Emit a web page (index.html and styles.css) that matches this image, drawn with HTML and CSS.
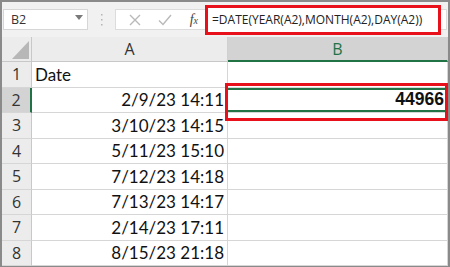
FILE: index.html
```html
<!DOCTYPE html>
<html lang="en">
<head>
  <meta charset="UTF-8">
  <title>Excel DATE formula</title>
  <link rel="stylesheet" href="styles.css">
</head>
<body>
  <div class="window">
    <div class="toolbar">
      <div class="namebox">
        <span>B2</span>
        <svg width="8" height="5" viewBox="0 0 8 5"><path d="M0 0h8L4 5z" fill="#7a7a7a"/></svg>
      </div>
      <div class="grip">
        <svg width="3" height="14" viewBox="0 0 3 14"><g fill="#b4b4b4"><rect x="1" y="1" width="1.5" height="1.5"/><rect x="1" y="6" width="1.5" height="1.5"/><rect x="1" y="11" width="1.5" height="1.5"/></g></svg>
      </div>
      <div class="fxbar">
        <div class="fxbtns">
          <svg width="12" height="12" viewBox="0 0 12 12"><path d="M1 1l10 10M11 1L1 11" stroke="#b9b9b9" stroke-width="1.4" fill="none"/></svg>
          <svg width="14" height="12" viewBox="0 0 14 12"><path d="M1 6.5l4 4L13 1" stroke="#b9b9b9" stroke-width="1.4" fill="none"/></svg>
          <span class="fx">f<sub>x</sub></span>
        </div>
        <div class="formula">=DATE(YEAR(A2),MONTH(A2),DAY(A2))</div>
      </div>
    </div>

    <div class="sheet">
      <div class="corner">
        <svg width="17" height="18" viewBox="0 0 17 18"><path d="M17 0v18H0z" fill="#b7b7b7"/></svg>
      </div>
      <div class="colhead">A</div>
      <div class="colhead active">B</div>

      <div class="rowhead">1</div>
      <div class="cell">Date</div>
      <div class="cell"></div>

      <div class="rowhead active">2</div>
      <div class="cell num">2/9/23 14:11</div>
      <div class="cell result">44966</div>

      <div class="rowhead">3</div>
      <div class="cell num">3/10/23 14:15</div>
      <div class="cell"></div>

      <div class="rowhead">4</div>
      <div class="cell num">5/11/23 15:10</div>
      <div class="cell"></div>

      <div class="rowhead">5</div>
      <div class="cell num">7/12/23 14:18</div>
      <div class="cell"></div>

      <div class="rowhead">6</div>
      <div class="cell num">7/13/23 14:17</div>
      <div class="cell"></div>

      <div class="rowhead">7</div>
      <div class="cell num">2/14/23 17:11</div>
      <div class="cell"></div>

      <div class="rowhead">8</div>
      <div class="cell num">8/15/23 21:18</div>
      <div class="cell"></div>

      <div class="highlight"></div>
    </div>
  </div>
</body>
</html>
```

FILE: styles.css
```css
body {
  margin: 0;
  font-family: "Open Sans", "Liberation Sans", sans-serif;
  background: #ffffff;
}
.window {
  width: 450px;
  height: 267px;
  box-sizing: border-box;
  border: 2px solid #8a8a8a;
  border-bottom-width: 1px;
  overflow: hidden;
  background: #ffffff;
}
.toolbar {
  height: 35px;
  background: #f1f1f1;
  display: flex;
  align-items: center;
  padding-left: 1px;
  padding-right: 1px;
}
.namebox {
  width: 85px;
  height: 21px;
  box-sizing: border-box;
  background: #ffffff;
  border: 1px solid #d6d6d6;
  display: flex;
  align-items: center;
  justify-content: space-between;
  padding: 0 4px 0 7px;
  font-size: 12.5px;
  color: #333;
}
.namebox svg {
  margin-top: -4px;
}
.grip {
  width: 27px;
  display: flex;
  justify-content: center;
}
.fxbar {
  flex: 1;
  height: 21px;
  background: #ffffff;
  border: 1px solid #dcdcdc;
  box-sizing: border-box;
  display: flex;
  align-items: center;
}
.fxbtns {
  width: 88px;
  display: flex;
  align-items: center;
  justify-content: space-between;
  padding: 0 6px 0 13px;
  box-sizing: border-box;
}
.fx {
  font-family: "Liberation Serif", serif;
  font-style: italic;
  font-size: 14px;
  color: #444;
}
.fx sub {
  font-size: 10px;
  vertical-align: 0;
}
.formula {
  height: 30px;
  width: 236px;
  flex: none;
  box-sizing: border-box;
  border: 3px solid #e8101a;
  background: #ffffff;
  display: flex;
  align-items: center;
  padding-left: 4px;
  font-size: 12px;
  color: #222;
  white-space: nowrap;
  margin-left: 1px;
}
.sheet {
  position: relative;
  display: grid;
  grid-template-columns: 30px 196px 1fr;
  grid-template-rows: 25px repeat(8, 25.5px);
  font-family: "Lato", "Open Sans", sans-serif;
  font-size: 17px;
  color: #111;
}
.corner {
  background: #ececec;
  border-right: 1px solid #c8c8c8;
  border-bottom: 1px solid #c8c8c8;
  display: flex;
  align-items: flex-end;
  justify-content: flex-end;
  padding: 0 2px 2px 0;
}
.colhead {
  background: #ececec;
  border-right: 1px solid #d0d0d0;
  border-bottom: 1px solid #c8c8c8;
  display: flex;
  align-items: center;
  justify-content: center;
  font-family: "Open Sans", sans-serif;
  font-size: 16px;
  color: #333;
}
.colhead.active {
  background: #d3d3d3;
  border-bottom: 2px solid #217346;
  color: #217346;
}
.rowhead {
  background: #ececec;
  border-right: 1px solid #c8c8c8;
  border-bottom: 1px solid #d6d6d6;
  display: flex;
  align-items: center;
  justify-content: center;
  font-family: "Open Sans", sans-serif;
  font-size: 16px;
  color: #333;
}
.rowhead.active {
  background: #d3d3d3;
  border-right: 2px solid #217346;
}
.cell {
  border-right: 1px solid #d6d6d6;
  border-bottom: 1px solid #d6d6d6;
  display: flex;
  align-items: center;
  padding: 0 3px;
  white-space: nowrap;
}
.cell.num {
  justify-content: flex-end;
}
.cell.result {
  justify-content: flex-end;
  font-family: "Liberation Sans", Arial, sans-serif;
  font-weight: bold;
  font-size: 17.5px;
  box-shadow: inset 0 2px 0 #217346, inset 0 -2px 0 #217346;
}
.highlight {
  position: absolute;
  left: 223px;
  top: 46px;
  width: 223px;
  height: 38px;
  box-sizing: border-box;
  border: 3px solid #e8101a;
}
```
